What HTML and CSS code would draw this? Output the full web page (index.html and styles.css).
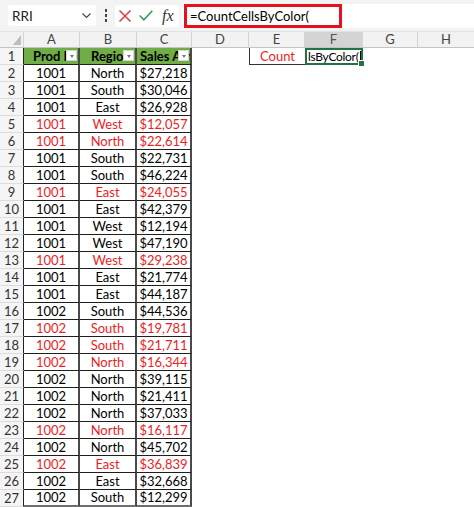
FILE: index.html
```html
<!DOCTYPE html>
<html>
<head>
<meta charset="utf-8">
<link rel="stylesheet" href="styles.css">
</head>
<body>
<div class="toolbar">
  <div class="namebox"><span>RRI</span><svg class="chev" width="9" height="5" viewBox="0 0 9 5"><path d="M0.5 0.5 L4.5 4.5 L8.5 0.5" fill="none" stroke="#444" stroke-width="1.1"/></svg></div>
  <div class="dots"><i></i><i></i><i></i></div>
  <div class="fnbox">
    <svg class="xicon" width="12" height="12" viewBox="0 0 12 12"><path d="M0.5 0.5 L11.5 11.5 M11.5 0.5 L0.5 11.5" stroke="#e0393e" stroke-width="1.5" fill="none"/></svg>
    <svg class="check" width="14" height="11" viewBox="0 0 14 11"><path d="M0.7 5.5 L4.8 9.8 L13.3 0.7" stroke="#2e9e52" stroke-width="1.5" fill="none"/></svg>
    <span class="fx">fx</span>
  </div>
  <div class="formula"><div class="edit">=CountCellsByColor(</div></div>
</div>
<div class="sheet">
  <div class="ch corner"><svg width="8" height="10" viewBox="0 0 8 10"><path d="M8 0 L8 10 L0 10 Z" fill="#bdbdbd"/></svg></div>
  <div class="ch">A</div><div class="ch">B</div><div class="ch">C</div><div class="ch">D</div><div class="ch">E</div><div class="ch sel">F</div><div class="ch">G</div><div class="ch last">H</div>

  <div class="rn">1</div>
  <div class="c th p9">Prod ID<span class="flt"></span></div>
  <div class="c th p11">Region<span class="flt"></span></div>
  <div class="c th p3">Sales Amount<span class="flt"></span></div>
  <div class="blank"></div>
  <div class="count">Count</div>
  <div class="active">lsByColor(<span class="caret"></span></div>

  <div class="rn">2</div><div class="c">1001</div><div class="c">North</div><div class="c">$27,218</div>
  <div class="rn">3</div><div class="c">1001</div><div class="c">South</div><div class="c">$30,046</div>
  <div class="rn">4</div><div class="c">1001</div><div class="c">East</div><div class="c">$26,928</div>
  <div class="rn">5</div><div class="c r">1001</div><div class="c r">West</div><div class="c r">$12,057</div>
  <div class="rn">6</div><div class="c r">1001</div><div class="c r">North</div><div class="c r">$22,614</div>
  <div class="rn">7</div><div class="c">1001</div><div class="c">South</div><div class="c">$22,731</div>
  <div class="rn">8</div><div class="c">1001</div><div class="c">South</div><div class="c">$46,224</div>
  <div class="rn">9</div><div class="c r">1001</div><div class="c r">East</div><div class="c r">$24,055</div>
  <div class="rn">10</div><div class="c">1001</div><div class="c">East</div><div class="c">$42,379</div>
  <div class="rn">11</div><div class="c">1001</div><div class="c">West</div><div class="c">$12,194</div>
  <div class="rn">12</div><div class="c">1001</div><div class="c">West</div><div class="c">$47,190</div>
  <div class="rn">13</div><div class="c r">1001</div><div class="c r">West</div><div class="c r">$29,238</div>
  <div class="rn">14</div><div class="c">1001</div><div class="c">East</div><div class="c">$21,774</div>
  <div class="rn">15</div><div class="c">1001</div><div class="c">East</div><div class="c">$44,187</div>
  <div class="rn">16</div><div class="c">1002</div><div class="c">South</div><div class="c">$44,536</div>
  <div class="rn">17</div><div class="c r">1002</div><div class="c r">South</div><div class="c r">$19,781</div>
  <div class="rn">18</div><div class="c r">1002</div><div class="c r">South</div><div class="c r">$21,711</div>
  <div class="rn">19</div><div class="c r">1002</div><div class="c r">North</div><div class="c r">$16,344</div>
  <div class="rn">20</div><div class="c">1002</div><div class="c">North</div><div class="c">$39,115</div>
  <div class="rn">21</div><div class="c">1002</div><div class="c">North</div><div class="c">$21,411</div>
  <div class="rn">22</div><div class="c">1002</div><div class="c">North</div><div class="c">$37,033</div>
  <div class="rn">23</div><div class="c r">1002</div><div class="c r">North</div><div class="c r">$16,117</div>
  <div class="rn">24</div><div class="c">1002</div><div class="c">North</div><div class="c">$45,702</div>
  <div class="rn">25</div><div class="c r">1002</div><div class="c r">East</div><div class="c r">$36,839</div>
  <div class="rn">26</div><div class="c">1002</div><div class="c">East</div><div class="c">$32,668</div>
  <div class="rn">27</div><div class="c end">1002</div><div class="c end">South</div><div class="c end">$12,299</div>
</div>
</body>
</html>
```
FILE: styles.css
```css
* { box-sizing: border-box; }
html, body { margin: 0; padding: 0; background: #fff; }
body {
  width: 474px;
  height: 507px;
  overflow: hidden;
  font-family: Lato, "Open Sans", sans-serif;
  font-size: 13px;
  color: #000;
}

/* toolbar */
.toolbar {
  height: 32px;
  background: #f3f3f3;
  display: flex;
  align-items: center;
  border-bottom: 1px solid #e2e2e2;
}
.namebox {
  margin-left: 8px;
  width: 88px;
  height: 21px;
  background: #fff;
  border-radius: 3px;
  display: flex;
  align-items: center;
  padding-left: 4px;
  padding-right: 5px;
  color: #222;
  font-size: 13.5px;
}
.chev { margin-left: auto; }
.dots {
  width: 19px;
  display: flex;
  flex-direction: column;
  align-items: center;
  gap: 2px;
}
.dots i {
  display: block;
  width: 2px;
  height: 3px;
  background: #444;
}
.fnbox {
  width: 64px;
  height: 22px;
  background: #fff;
  border-radius: 3px;
  display: flex;
  align-items: center;
  padding-left: 4px;
}
.check { margin-left: 8px; }
.fx {
  margin-left: 9px;
  font-family: "Liberation Serif", serif;
  font-style: italic;
  font-size: 16px;
  color: #333;
  line-height: 1;
}
.formula {
  margin-left: 3px;
  flex: 1;
  height: 24px;
  background: #fff;
  padding-left: 2px;
}
.edit {
  width: 158px;
  height: 24px;
  border: 3px solid #e3131d;
  padding-left: 3px;
  display: flex;
  align-items: center;
  white-space: nowrap;
  font-size: 13px;
  color: #000;
}

/* sheet */
.sheet {
  display: grid;
  grid-template-columns: 24px 56px 57px 55px 57px 56px 58px 55px 1fr;
  grid-template-rows: 16px repeat(27, 17px);
}
.sheet > div {
  display: flex;
  align-items: center;
  justify-content: center;
  white-space: nowrap;
  overflow: hidden;
  line-height: 1;
}
.ch {
  background: #f2f2f2;
  color: #444;
  border-right: 1px solid #d4d4d4;
  border-bottom: 1px solid #c4c4c4;
  font-size: 13px;
}
.ch.last { border-right: none; }
.ch.sel { background: #d4d4d4; color: #555; }
.corner { justify-content: flex-end !important; align-items: flex-end !important; padding: 0 2px 2px 0; }
.rn {
  grid-column: 1;
  background: #f5f5f5;
  color: #333;
  border-right: 1px solid #222;
  border-bottom: 1px solid #dcdcdc;
}
.c {
  border-right: 2px solid #4a4a4a;
  border-bottom: 1px solid #1e1e1e;
}
.c.r { color: #ee1c25; }
.c.end { border-bottom: 2px solid #6e6e6e; }
.th {
  background: #70ad47;
  font-weight: bold;
  justify-content: flex-start !important;
  position: relative;
}
.p9 { padding-left: 9px; }
.p11 { padding-left: 11px; }
.p3 { padding-left: 3px; }
.flt {
  position: absolute;
  right: 1px;
  top: 2px;
  width: 11px;
  height: 11px;
  background: #fff;
  border: 1px solid #d4d4d4;
}
.flt::after {
  content: "";
  position: absolute;
  left: 2.5px;
  top: 3.5px;
  border-left: 2.5px solid transparent;
  border-right: 2.5px solid transparent;
  border-top: 3px solid #777;
}
.count {
  color: #ee1c25;
  border-left: 1px solid #333;
  border-bottom: 1px solid #333;
}
.sheet > .active {
  border: 2px solid #217346;
  justify-content: flex-start;
  padding-left: 1px;
  position: relative;
  overflow: visible;
  color: #000;
  font-size: 12px;
  letter-spacing: -0.3px;
}
.caret {
  display: inline-block;
  width: 1px;
  height: 12px;
  background: #000;
  margin-left: 1px;
}
.active::after {
  content: "";
  position: absolute;
  right: -4px;
  bottom: -4px;
  width: 5px;
  height: 5px;
  background: #217346;
  border: 1px solid #fff;
}
```
